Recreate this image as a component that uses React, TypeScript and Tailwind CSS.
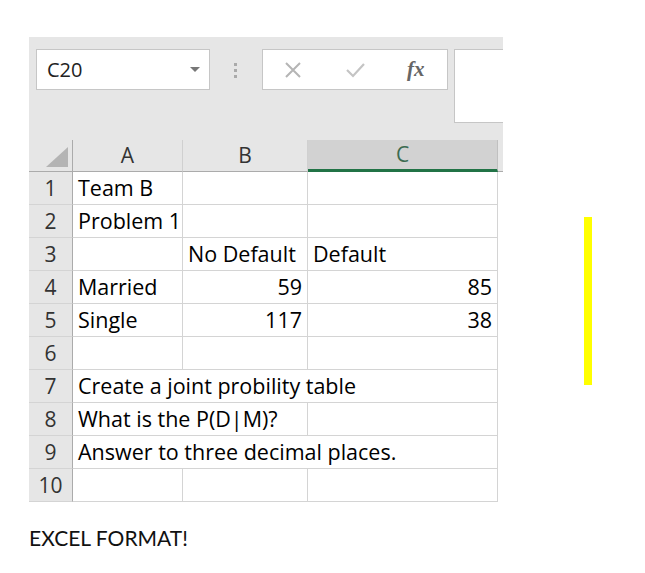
import { Fragment } from 'react'

const cellFont = { fontFamily: '"Open Sans", "Noto Sans", sans-serif' }

type Cell = { text?: string; span?: number; right?: boolean }

const rows: Cell[][] = [
  [{ text: 'Team B' }, {}, {}],
  [{ text: 'Problem 1' }, {}, {}],
  [{}, { text: 'No Default' }, { text: 'Default' }],
  [{ text: 'Married' }, { text: '59', right: true }, { text: '85', right: true }],
  [{ text: 'Single' }, { text: '117', right: true }, { text: '38', right: true }],
  [{}, {}, {}],
  [{ text: 'Create a joint probility table', span: 3 }],
  [{ text: 'What is the P(D|M)?', span: 2 }, {}],
  [{ text: 'Answer to three decimal places.', span: 3 }],
  [{}, {}, {}],
]

const spanClass: Record<number, string> = {
  1: 'col-span-1',
  2: 'col-span-2',
  3: 'col-span-3',
}

function FormulaBar() {
  return (
    <div className="relative h-[103px] bg-[#e6e6e6]">
      <div className="absolute left-[7px] top-[12px] flex h-[41px] w-[174px] items-center justify-between border border-[#c6c6c6] bg-white pl-[10px] pr-[9px]">
        <span className="text-[20px] text-[#222]" style={cellFont}>C20</span>
        <svg width="10" height="6" viewBox="0 0 10 6">
          <path d="M0 0 L10 0 L5 5 Z" fill="#777" />
        </svg>
      </div>
      <div className="absolute left-[205px] top-[26px] flex flex-col gap-[3px]">
        <span className="h-[3px] w-[3px] bg-[#aaa]" />
        <span className="h-[3px] w-[3px] bg-[#aaa]" />
        <span className="h-[3px] w-[3px] bg-[#aaa]" />
      </div>
      <div className="absolute left-[233px] top-[12px] flex h-[41px] w-[186px] items-center border border-[#c6c6c6] bg-white">
        <svg className="ml-[20px]" width="20" height="20" viewBox="0 0 20 20">
          <path d="M3 3 L17 17 M17 3 L3 17" stroke="#b5b5b5" strokeWidth="2" fill="none" />
        </svg>
        <svg className="ml-[42px]" width="20" height="16" viewBox="0 0 20 16">
          <path d="M2 8 L8 14 L19 2" stroke="#c4c4c4" strokeWidth="2.2" fill="none" />
        </svg>
        <span
          className="ml-[42px] text-[21px] font-bold italic text-[#666]"
          style={{ fontFamily: '"Liberation Serif", serif' }}
        >
          fx
        </span>
      </div>
      <div className="absolute left-[425px] top-[12px] h-[74px] w-[60px] border border-[#c6c6c6] bg-white" />
    </div>
  )
}

function Sheet() {
  return (
    <div className="grid grid-cols-[44px_110px_125px_190px_5px]" style={cellFont}>
      <div className="relative h-[32px] border-b border-r border-[#ababab] bg-[#e6e6e6]">
        <svg className="absolute bottom-[4px] right-[4px]" width="22" height="20" viewBox="0 0 22 20">
          <path d="M22 0 L22 20 L0 20 Z" fill="#b4b4b4" />
        </svg>
      </div>
      <div className="flex h-[32px] items-center justify-center border-b border-r border-b-[#ababab] border-r-[#d0d0d0] bg-[#e6e6e6] text-[21px] text-[#333]">A</div>
      <div className="flex h-[32px] items-center justify-center border-b border-r border-b-[#ababab] border-r-[#d0d0d0] bg-[#e6e6e6] text-[21px] text-[#333]">B</div>
      <div className="flex h-[32px] items-center justify-center border-b-[3px] border-r border-b-[#217346] border-r-[#c0c0c0] bg-[#d2d2d2] text-[21px] text-[#3b6b50]">C</div>
      <div className="h-[32px] border-b border-[#ababab] bg-[#e6e6e6]" />

      {rows.map((cells, i) => (
        <Fragment key={i}>
          <div className="flex h-[33px] items-center justify-center border-b border-r border-b-[#d4d4d4] border-r-[#ababab] bg-[#e6e6e6] pt-[1px] text-[21px] text-[#333]">
            {i + 1}
          </div>
          {cells.map((c, j) => (
            <div
              key={j}
              className={`${spanClass[c.span ?? 1]} flex h-[33px] items-center overflow-visible whitespace-nowrap border-b border-r border-[#d4d4d4] bg-white px-[5px] pt-[1px] text-[21.5px] text-black ${c.right ? 'justify-end' : 'justify-start'}`}
            >
              {c.text}
            </div>
          ))}
          <div className="h-[33px] bg-white" />
        </Fragment>
      ))}
    </div>
  )
}

export default function App() {
  return (
    <div className="min-h-[573px] w-[645px] bg-white">
      <div className="flex items-start">
        <div className="ml-[29px] mt-[37px] w-[474px] overflow-hidden">
          <FormulaBar />
          <Sheet />
        </div>
        <div className="ml-[81px] mt-[217px] h-[168px] w-[8px] bg-[#ffff00]" />
      </div>
      <div
        className="ml-[29px] mt-[20px] text-[21px] text-[#111]"
        style={{ fontFamily: 'Lato, "Noto Sans", sans-serif' }}
      >
        EXCEL FORMAT!
      </div>
    </div>
  )
}
